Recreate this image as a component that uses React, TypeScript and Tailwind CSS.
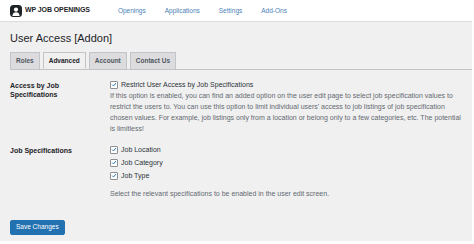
import React from "react";

const Check = ({ label }: { label: string }) => (
  <label className="flex items-center gap-[3px] text-[7px] leading-[9px] text-[#2c3338]">
    <span className="w-[8px] h-[8px] border border-[#8c8f94] bg-white rounded-[1px] flex items-center justify-center shrink-0">
      <svg viewBox="0 0 10 10" className="w-[7px] h-[7px]">
        <path d="M2 5.2 L4.2 7.4 L8.2 2.6" fill="none" stroke="#2271b1" strokeWidth="1.6" />
      </svg>
    </span>
    {label}
  </label>
);

export default function App() {
  const tabs = ["Roles", "Advanced", "Account", "Contact Us"];
  return (
    <div className="w-[474px] h-[244px] bg-white overflow-hidden" style={{ fontFamily: '"Liberation Sans", Arial, sans-serif' }}>
      <div className="w-[472px] h-[241px] bg-[#f0f0f1] flex flex-col">
        {/* top bar */}
        <div className="h-[22px] bg-white border-b border-[#dcdcde] flex items-center px-[10px] shrink-0">
          <div className="flex items-center gap-[3px]">
            <svg viewBox="0 0 12 12" className="w-[12px] h-[12px]">
              <rect x="0" y="0" width="12" height="12" rx="3.5" fill="#1d2327" />
              <circle cx="6" cy="4.6" r="2.1" fill="#fff" />
              <path d="M2.4 11 C2.6 8.2 4 7.2 6 7.2 C8 7.2 9.4 8.2 9.6 11 Z" fill="#fff" />
            </svg>
            <span className="text-[7px] font-bold tracking-[-0.1px] text-[#1d2327]">WP JOB OPENINGS</span>
          </div>
          <nav className="flex items-center gap-[19px] ml-[28px] text-[6.5px] text-[#4a7fb5]">
            <span>Openings</span>
            <span>Applications</span>
            <span>Settings</span>
            <span>Add-Ons</span>
          </nav>
        </div>

        <div className="px-[10px]">
          <h1 className="text-[11px] leading-[14px] text-[#1d2327] mt-[9px]">User Access [Addon]</h1>

          {/* tabs */}
          <div className="flex gap-[3px] mt-[7px] border-b border-[#c3c4c7] -mr-[10px]">
            {tabs.map((t) => (
              <div
                key={t}
                className={
                  t === "Advanced"
                    ? "h-[17px] px-[5px] flex items-center text-[6.5px] font-semibold text-[#1d2327] bg-[#f0f0f1] border border-[#c3c4c7] border-b-[#f0f0f1] -mb-px"
                    : "h-[17px] px-[5px] flex items-center text-[6.5px] font-semibold text-[#50575e] bg-[#dcdcde] border border-[#c3c4c7] border-b-0"
                }
              >
                {t}
              </div>
            ))}
          </div>

          {/* form table */}
          <div className="flex mt-[10px]">
            <div className="w-[100px] shrink-0 pt-[1px] text-[7px] leading-[9px] font-bold text-[#1d2327]">
              Access by Job<br />Specifications
            </div>
            <div className="w-[360px]">
              <Check label="Restrict User Access by Job Specifications" />
              <p className="mt-[1px] text-[7px] leading-[11px] text-[#646970] whitespace-nowrap">
                If this option is enabled, you can find an added option on the user edit page to select job specification values to<br />
                restrict the users to. You can use this option to limit individual users' access to job listings of job specification<br />
                chosen values. For example, job listings only from a location or belong only to a few categories, etc. The potential<br />
                is limitless!
              </p>
            </div>
          </div>

          <div className="flex mt-[11px]">
            <div className="w-[100px] shrink-0 pt-[1px] text-[7px] leading-[9px] font-bold text-[#1d2327]">
              Job Specifications
            </div>
            <div className="flex flex-col gap-[4px]">
              <Check label="Job Location" />
              <Check label="Job Category" />
              <Check label="Job Type" />
              <p className="mt-[5px] text-[7px] leading-[10px] text-[#646970]">
                Select the relevant specifications to be enabled in the user edit screen.
              </p>
            </div>
          </div>

          <button className="mt-[21px] h-[15px] px-[5px] bg-[#2271b1] border border-[#2271b1] rounded-[2px] text-white text-[6.5px] leading-none">
            Save Changes
          </button>
        </div>
      </div>
    </div>
  );
}
